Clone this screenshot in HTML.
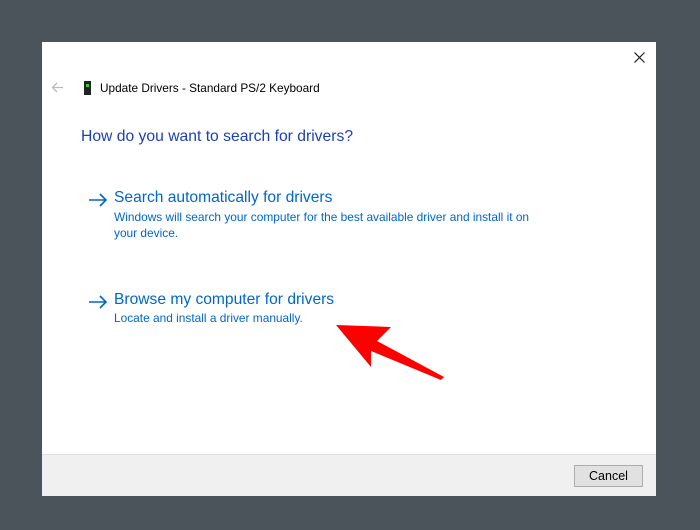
<!DOCTYPE html><html><head><style>
body{margin:0;width:700px;height:530px;background:#4b545a;position:relative;font-family:"Liberation Sans",sans-serif;overflow:hidden}
.d{position:absolute;left:42px;top:42px;width:614px;height:453px;background:#fff}
.f{position:absolute;left:0;top:412px;width:614px;height:41px;background:#f0f0f0;border-top:1px solid #dfdfdf}
.t{position:absolute;white-space:nowrap}
.btn{position:absolute;left:532px;top:10px;width:67px;height:20px;border:1px solid #adadad;background:#e1e1e1;font-size:12.5px;text-align:center;line-height:20px;color:#000}
</style></head><body>
<div class="d">
<svg style="position:absolute;left:592px;top:10px" width="11" height="11"><path d="M0.5 0.5L10.5 10.5M10.5 0.5L0.5 10.5" stroke="#222" stroke-width="1.2"/></svg>
<svg style="position:absolute;left:9px;top:40px" width="13" height="11"><path d="M12 5.5H1.5M6 1L1.5 5.5L6 10" stroke="#bbb" stroke-width="1.3" fill="none"/></svg>
<div style="position:absolute;left:42px;top:39px;width:7px;height:14px;background:#222"><div style="position:absolute;left:2px;top:3px;width:3px;height:3px;background:#3c3"></div></div>
<div class="t" style="left:58px;top:39px;font-size:11.8px;color:#000">Update Drivers - Standard PS/2 Keyboard</div>
<div class="t" style="left:39px;top:86px;font-size:15.7px;color:#1c3fb8">How do you want to search for drivers?</div>
<svg style="position:absolute;left:47px;top:151px" width="19" height="14"><path d="M0 7H17M11 1L17 7L11 13" stroke="#0066cc" stroke-width="1.6" fill="none"/></svg>
<div class="t" style="left:72px;top:147px;font-size:15.6px;color:#0066cc">Search automatically for drivers</div>
<div class="t" style="left:72px;top:167px;font-size:11.9px;color:#0066cc;line-height:16px">Windows will search your computer for the best available driver and install it on<br>your device.</div>
<svg style="position:absolute;left:47px;top:253px" width="19" height="14"><path d="M0 7H17M11 1L17 7L11 13" stroke="#0066cc" stroke-width="1.6" fill="none"/></svg>
<div class="t" style="left:72px;top:249px;font-size:15.6px;color:#0066cc">Browse my computer for drivers</div>
<div class="t" style="left:72px;top:269px;font-size:11.9px;color:#0066cc">Locate and install a driver manually.</div>
<div class="f"><div class="btn">Cancel</div></div>
</div>
<svg style="position:absolute;left:0;top:0" width="700" height="530"><polygon points="336,325 391,327 377,341 444,377 441,380 371,351 371,367" fill="#f00"/></svg>
</body></html>
